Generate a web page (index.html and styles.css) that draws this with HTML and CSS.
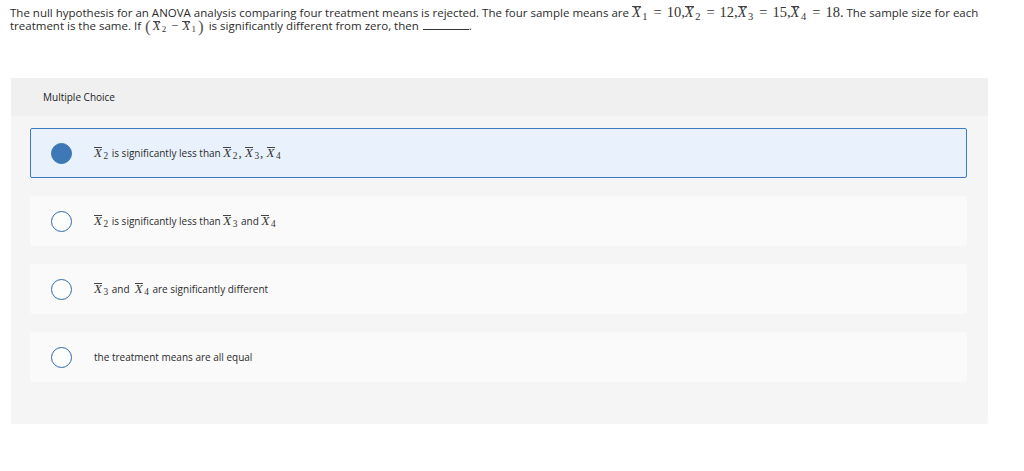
FILE: index.html
```html
<!DOCTYPE html>
<html>
<head>
<meta charset="utf-8">
<link rel="stylesheet" href="styles.css">
</head>
<body>
<div class="question">
  <p class="qline">The null hypothesis for an ANOVA analysis comparing four treatment means is rejected. The four sample means are <span class="math big"><span class="xb">X</span><sub>1</sub><span class="eq">=</span>10,<span class="xb">X</span><sub>2</sub><span class="eq">=</span>12,<span class="xb">X</span><sub>3</sub><span class="eq">=</span>15,<span class="xb">X</span><sub>4</sub><span class="eq">=</span>18.</span> The sample size for each</p>
  <p class="qline">treatment is the same. If <span class="math mid"><span class="paren">(</span><span class="xb">X</span><sub>2</sub><span class="eq">−</span><span class="xb">X</span><sub>1</sub><span class="paren">)</span></span> is significantly different from zero, then <span class="blank"></span>.</p>
</div>

<div class="panel">
  <div class="panel-head">Multiple Choice</div>
  <div class="panel-body">
    <div class="option selected">
      <span class="radio"></span>
      <span class="label"><span class="math"><span class="xb">X</span><sub>2</sub></span> is significantly less than <span class="math"><span class="xb">X</span><sub>2</sub>, <span class="xb">X</span><sub>3</sub>, <span class="xb">X</span><sub>4</sub></span></span>
    </div>
    <div class="option">
      <span class="radio"></span>
      <span class="label"><span class="math"><span class="xb">X</span><sub>2</sub></span> is significantly less than <span class="math"><span class="xb">X</span><sub>3</sub></span> and <span class="math"><span class="xb">X</span><sub>4</sub></span></span>
    </div>
    <div class="option">
      <span class="radio"></span>
      <span class="label"><span class="math"><span class="xb">X</span><sub>3</sub></span> and &nbsp;<span class="math"><span class="xb">X</span><sub>4</sub></span> are significantly different</span>
    </div>
    <div class="option">
      <span class="radio"></span>
      <span class="label">the treatment means are all equal</span>
    </div>
  </div>
</div>
</body>
</html>
```
FILE: styles.css
```css
html, body {
  margin: 0;
  padding: 0;
  background: #ffffff;
}
body {
  font-family: "Open Sans", "Liberation Sans", Arial, sans-serif;
  color: #2b2b2b;
}
.question {
  padding: 5px 10px 0 10px;
  height: 38px;
  box-sizing: border-box;
}
.qline {
  margin: 0;
  font-size: 11.5px;
  line-height: 14px;
  height: 14px;
  white-space: nowrap;
}
.math {
  font-family: "Liberation Serif", "Times New Roman", serif;
  font-size: 13px;
  color: #333;
}
.math.big {
  font-size: 14.5px;
}
.math.mid {
  font-size: 12.5px;
}
.xb {
  font-style: italic;
  display: inline-block;
  line-height: 0.75;
  border-top: 1px solid #444;
}
.math.big .xb {
  line-height: 0.8;
}
.eq {
  margin: 0 5px;
}
.math.mid .eq {
  margin: 0 4px;
}
.math sub {
  font-size: 0.72em;
  vertical-align: -0.25em;
  line-height: 0;
  font-style: normal;
  margin-left: 1.5px;
  margin-right: 1px;
}
.paren {
  font-size: 17px;
  line-height: 0;
  vertical-align: -2px;
  color: #555;
  margin: 0 2px 0 1px;
}
.blank {
  display: inline-block;
  width: 46px;
  border-bottom: 1px solid #333;
  vertical-align: 0;
  margin-left: 1px;
}
.panel {
  margin: 40px 0 0 11px;
  width: 977px;
  height: 346px;
  background: #f5f5f5;
  border-radius: 2px;
}
.panel-head {
  height: 38px;
  background: #f0f0f0;
  font-size: 10px;
  line-height: 38px;
  padding-left: 32px;
  color: #222;
  box-sizing: border-box;
}
.panel-body {
  padding: 12px 21px 0 19px;
  display: flex;
  flex-direction: column;
  gap: 18px;
}
.option {
  height: 50px;
  box-sizing: border-box;
  background: #fafafa;
  border-radius: 3px;
  display: flex;
  align-items: center;
  padding-left: 20px;
  border: 1px solid transparent;
}
.option.selected {
  background: #e9f2fc;
  border: 1px solid #3a7bc4;
  border-radius: 2px;
}
.radio {
  width: 21px;
  height: 21px;
  box-sizing: border-box;
  border-radius: 50%;
  border: 1.5px solid #2d6aa6;
  background: #ffffff;
  flex: none;
}
.option.selected .radio {
  background: #3f78b7;
  border-color: #3a72b0;
}
.label {
  margin-left: 22px;
  font-size: 10px;
  color: #2b2b2b;
  white-space: nowrap;
}
```
